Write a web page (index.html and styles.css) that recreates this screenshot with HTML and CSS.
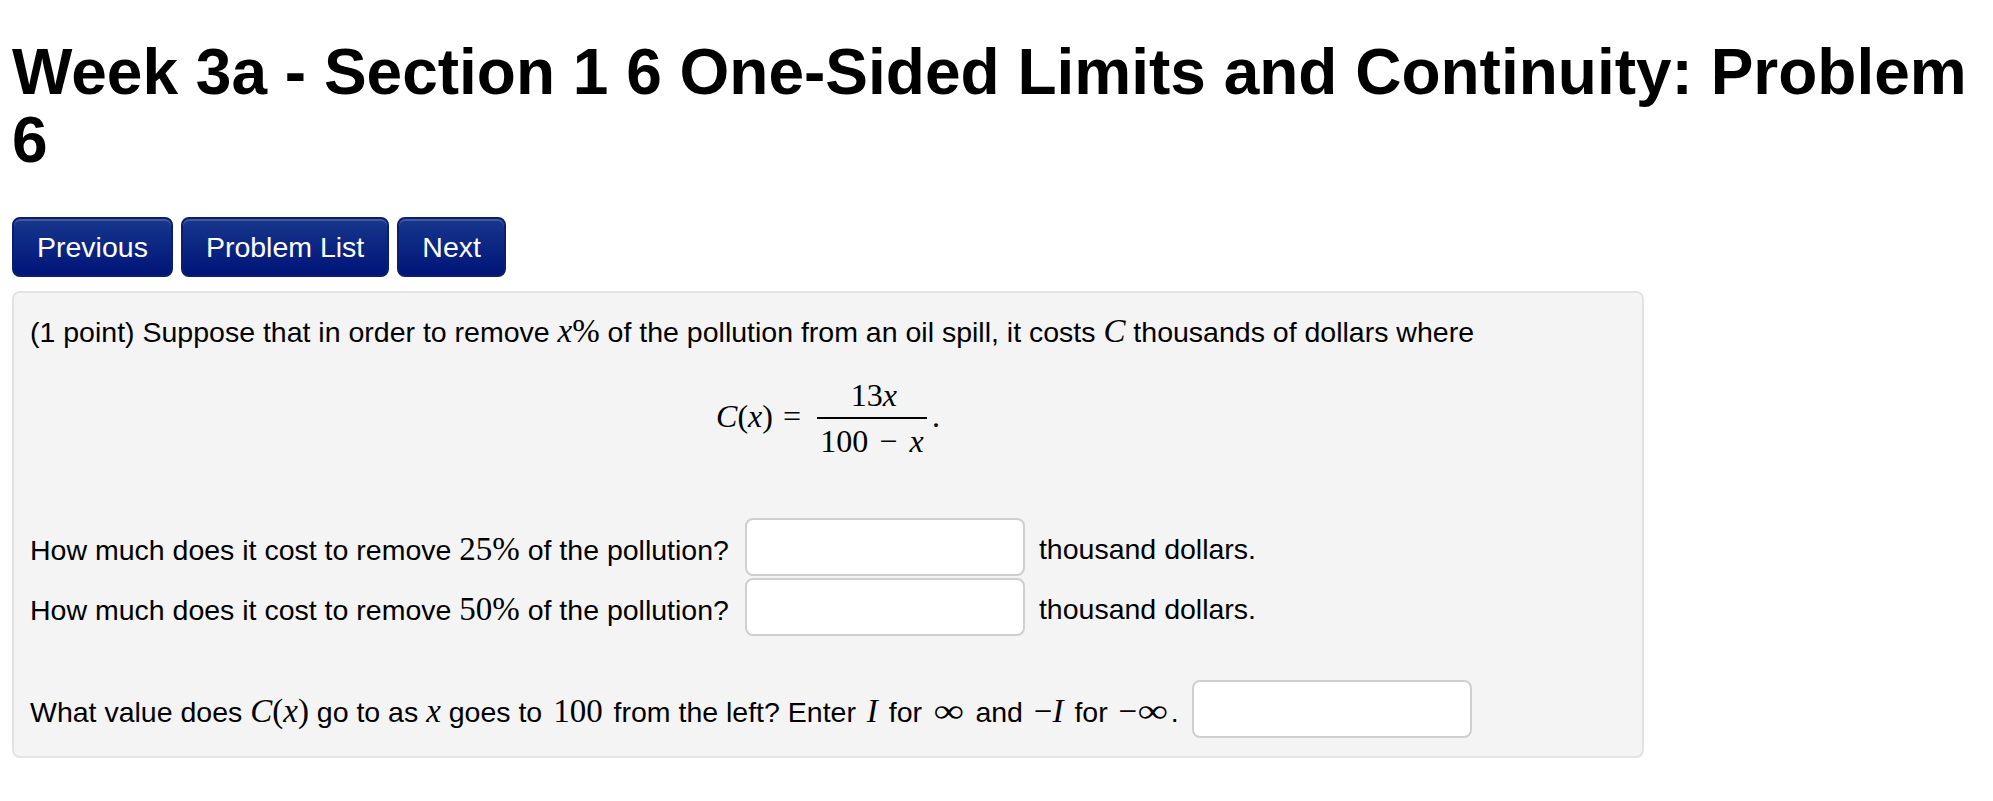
FILE: index.html
```html
<!DOCTYPE html>
<html lang="en">
  <head>
    <meta charset="utf-8">
    <title>Week 3a - Section 1 6 One-Sided Limits and Continuity: Problem 6</title>
    <link rel="stylesheet" href="styles.css">
  </head>
  <body>
    <h1 class="title">Week 3a - Section 1 6 One-Sided Limits and Continuity: Problem 6</h1>

    <div class="nav">
      <a class="btn" href="#">Previous</a>
      <a class="btn" href="#">Problem List</a>
      <a class="btn" href="#">Next</a>
    </div>

    <div class="problem">
      <p class="intro">(1 point) Suppose that in order to remove <span class="m"><i>x</i>%</span> of the pollution from an oil spill, it costs <span class="m"><i>C</i></span> thousands of dollars where</p>

      <div class="eq">
        <span class="eq-side"><i>C</i>(<i>x</i>)<span class="rel">=</span></span>
        <span class="frac">
          <span class="num">13<i>x</i></span>
          <span class="bar"></span>
          <span class="den">100<span class="op">−</span><i>x</i></span>
        </span>
        <span class="eq-side dot">.</span>
      </div>

      <div class="row">
        <span class="label">How much does it cost to remove <span class="m">25%</span> of the pollution?</span>
        <input class="answer" type="text">
        <span class="label">thousand dollars.</span>
      </div>
      <div class="row">
        <span class="label">How much does it cost to remove <span class="m">50%</span> of the pollution?</span>
        <input class="answer" type="text">
        <span class="label">thousand dollars.</span>
      </div>

      <div class="row last">
        <span class="label">What value does <span class="m"><i>C</i>(<i>x</i>)</span> go to as <span class="m"><i>x</i></span> goes to <span class="m sp">100</span> from the left? Enter <span class="m sp"><i>I</i></span> for <span class="m inf">∞</span> and <span class="m sp">−<i>I</i></span> for <span class="m sp">−<span class="inf">∞</span></span>.</span>
        <input class="answer" type="text">
      </div>
    </div>
  </body>
</html>
```

FILE: styles.css
```css
html,body,div,p,h1{
  margin:0;
  padding:0;
}
body{
  padding:0 12px;
  font-family:"Liberation Sans", Arial, sans-serif;
  font-size:28.5px;
  line-height:40px;
  color:#000;
  background:#fff;
}
.title{
  margin-top:38px;
  font-size:64px;
  line-height:68px;
  font-weight:bold;
}

/* nav buttons */
.nav{
  display:flex;
  gap:8px;
  margin-top:43px;
}
.nav .btn{
  display:flex;
  align-items:center;
  height:60px;
  padding:0 23px;
  box-sizing:border-box;
  font-size:28.5px;
  color:#fff;
  text-decoration:none;
  background:linear-gradient(#17378c, #001478);
  border:2px solid #0b1f6e;
  border-radius:8px;
  box-shadow:inset 0 2px 0 rgba(255,255,255,.18);
}

/* problem box */
.problem{
  margin-top:14px;
  width:1632px;
  box-sizing:border-box;
  padding:18px 16px 18px;
  background:#f4f4f4;
  border:2px solid #e3e3e3;
  border-radius:8px;
}
.m{
  font-family:"Liberation Serif", "Times New Roman", serif;
  font-size:33px;
}
.m i, .eq i{
  font-style:italic;
}
.m.sp{
  margin:0 3px;
}
.inf{
  display:inline-block;
  transform:scaleX(1.3);
  margin:0 7px;
}
.m.sp .inf{
  margin:0 3px 0 4px;
}

.eq{
  display:flex;
  justify-content:center;
  align-items:center;
  margin-top:27px;
  font-family:"Liberation Serif", "Times New Roman", serif;
  font-size:32px;
  line-height:32px;
}
.eq-side{
  padding-bottom:5px;
}
.eq .rel{
  margin:0 14px 0 10px;
}
.eq .dot{
  margin-left:5px;
}
.frac{
  display:flex;
  flex-direction:column;
  align-items:center;
  margin-left:2px;
}
.frac .num{
  padding-left:4px;
}
.frac .bar{
  display:block;
  width:110px;
  height:2px;
  margin:6px 0;
  background:#000;
}
.frac .op{
  margin:0 12px 0 11px;
}

.row{
  display:flex;
  align-items:center;
  margin-top:2px;
}
.eq + .row{
  margin-top:61px;
}
.row.last{
  margin-top:44px;
}
.row .label{
  padding-top:4px;
}
.answer{
  width:280px;
  height:58px;
  box-sizing:border-box;
  margin:0 14px 0 16px;
  padding:0 10px;
  font-size:28px;
  background:#fff;
  border:2px solid #cfcfcf;
  border-radius:8px;
  outline:none;
}
.row.last .answer{
  margin-left:13px;
}
```
